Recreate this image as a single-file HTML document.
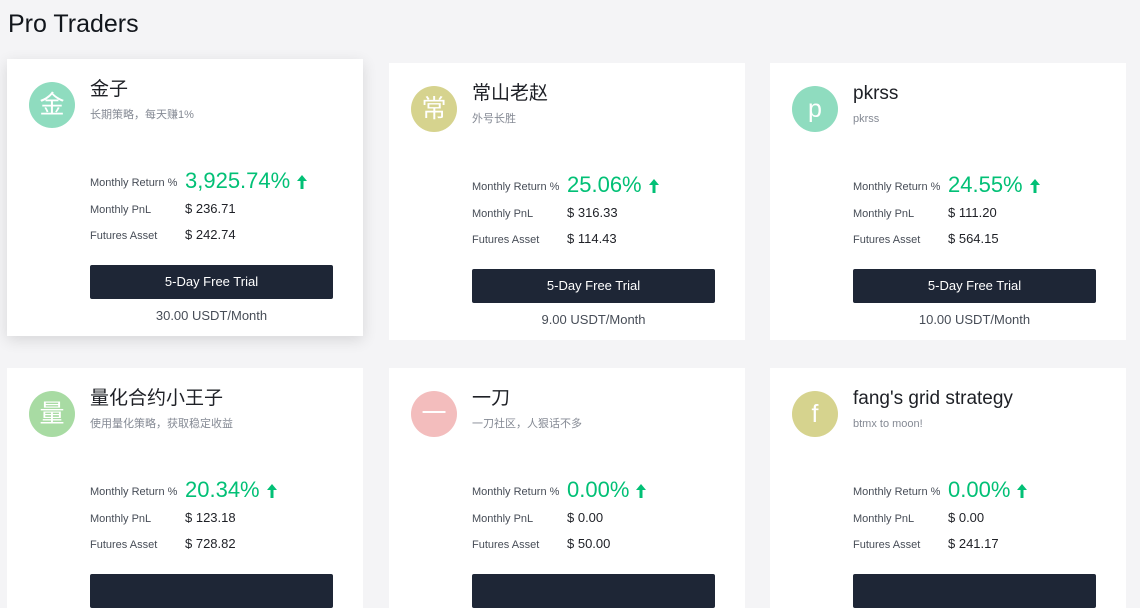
<!DOCTYPE html>
<html><head><meta charset="utf-8"><style>
*{margin:0;padding:0;box-sizing:border-box}
body{width:1140px;height:586px;overflow:hidden;background:#f4f4f6;font-family:"Liberation Sans","Noto Sans CJK SC",sans-serif;position:relative}
h1{position:absolute;left:8px;top:8px;font-size:25px;font-weight:400;color:#12161c;line-height:32px}
.card{position:absolute;width:356px;height:277px;background:#fff}
.card.hov{box-shadow:0 4px 14px rgba(0,0,0,.12)}
.av{position:absolute;left:22px;top:23px;width:46px;height:46px;border-radius:50%;color:#fff;font-size:25px;text-align:center;line-height:46px}
.nm{position:absolute;left:83px;top:19px;font-size:19px;color:#1e2026;line-height:24px}
.sb{position:absolute;left:83px;top:49px;font-size:11px;color:#858a94;line-height:14px}
.row{position:absolute;left:83px;font-size:11px;color:#474d57}
.v{position:absolute;left:95px;top:-3px;font-size:13px;color:#1e2026;white-space:nowrap}
.g{position:absolute;left:95px;top:-9px;font-size:22px;color:#02c076;white-space:nowrap}
.g svg{vertical-align:middle;margin-left:6px}
.btn{position:absolute;left:83px;top:206px;width:243px;height:34px;background:#1e2636;border-radius:2px;color:#fff;font-size:13px;text-align:center;line-height:34px}
.pr{position:absolute;left:83px;width:243px;top:249px;text-align:center;font-size:13px;color:#474d57}
</style></head><body>
<h1>Pro Traders</h1>

<div class="card hov" style="left:7px;top:59px">
<div class="av" style="background:#8fdcbf">金</div><div class="nm">金子</div><div class="sb">长期策略，每天赚1%</div>
<div class="row" style="top:118px">Monthly Return %<span class="g">3,925.74%<svg width="12" height="16" viewBox="0 0 12 16"><path d="M6 1L1 7h3.5v8h3V7H11z" fill="#02c076"/></svg></span></div>
<div class="row" style="top:145px">Monthly PnL<span class="v">$ 236.71</span></div>
<div class="row" style="top:171px">Futures Asset<span class="v">$ 242.74</span></div>
<div class="btn">5-Day Free Trial</div><div class="pr">30.00 USDT/Month</div></div>

<div class="card" style="left:389px;top:63px">
<div class="av" style="background:#d6d38e">常</div><div class="nm">常山老赵</div><div class="sb">外号长胜</div>
<div class="row" style="top:118px">Monthly Return %<span class="g">25.06%<svg width="12" height="16" viewBox="0 0 12 16"><path d="M6 1L1 7h3.5v8h3V7H11z" fill="#02c076"/></svg></span></div>
<div class="row" style="top:145px">Monthly PnL<span class="v">$ 316.33</span></div>
<div class="row" style="top:171px">Futures Asset<span class="v">$ 114.43</span></div>
<div class="btn">5-Day Free Trial</div><div class="pr">9.00 USDT/Month</div></div>

<div class="card" style="left:770px;top:63px">
<div class="av" style="background:#8fdcbf">p</div><div class="nm">pkrss</div><div class="sb">pkrss</div>
<div class="row" style="top:118px">Monthly Return %<span class="g">24.55%<svg width="12" height="16" viewBox="0 0 12 16"><path d="M6 1L1 7h3.5v8h3V7H11z" fill="#02c076"/></svg></span></div>
<div class="row" style="top:145px">Monthly PnL<span class="v">$ 111.20</span></div>
<div class="row" style="top:171px">Futures Asset<span class="v">$ 564.15</span></div>
<div class="btn">5-Day Free Trial</div><div class="pr">10.00 USDT/Month</div></div>

<div class="card" style="left:7px;top:368px;height:240px">
<div class="av" style="background:#a8dba3">量</div><div class="nm">量化合约小王子</div><div class="sb">使用量化策略，获取稳定收益</div>
<div class="row" style="top:118px">Monthly Return %<span class="g">20.34%<svg width="12" height="16" viewBox="0 0 12 16"><path d="M6 1L1 7h3.5v8h3V7H11z" fill="#02c076"/></svg></span></div>
<div class="row" style="top:145px">Monthly PnL<span class="v">$ 123.18</span></div>
<div class="row" style="top:171px">Futures Asset<span class="v">$ 728.82</span></div>
<div class="btn"></div></div>

<div class="card" style="left:389px;top:368px;height:240px">
<div class="av" style="background:#f3bdbd">一</div><div class="nm">一刀</div><div class="sb">一刀社区，人狠话不多</div>
<div class="row" style="top:118px">Monthly Return %<span class="g">0.00%<svg width="12" height="16" viewBox="0 0 12 16"><path d="M6 1L1 7h3.5v8h3V7H11z" fill="#02c076"/></svg></span></div>
<div class="row" style="top:145px">Monthly PnL<span class="v">$ 0.00</span></div>
<div class="row" style="top:171px">Futures Asset<span class="v">$ 50.00</span></div>
<div class="btn"></div></div>

<div class="card" style="left:770px;top:368px;height:240px">
<div class="av" style="background:#d6d38e">f</div><div class="nm">fang's grid strategy</div><div class="sb">btmx to moon!</div>
<div class="row" style="top:118px">Monthly Return %<span class="g">0.00%<svg width="12" height="16" viewBox="0 0 12 16"><path d="M6 1L1 7h3.5v8h3V7H11z" fill="#02c076"/></svg></span></div>
<div class="row" style="top:145px">Monthly PnL<span class="v">$ 0.00</span></div>
<div class="row" style="top:171px">Futures Asset<span class="v">$ 241.17</span></div>
<div class="btn"></div></div>
</body></html>
